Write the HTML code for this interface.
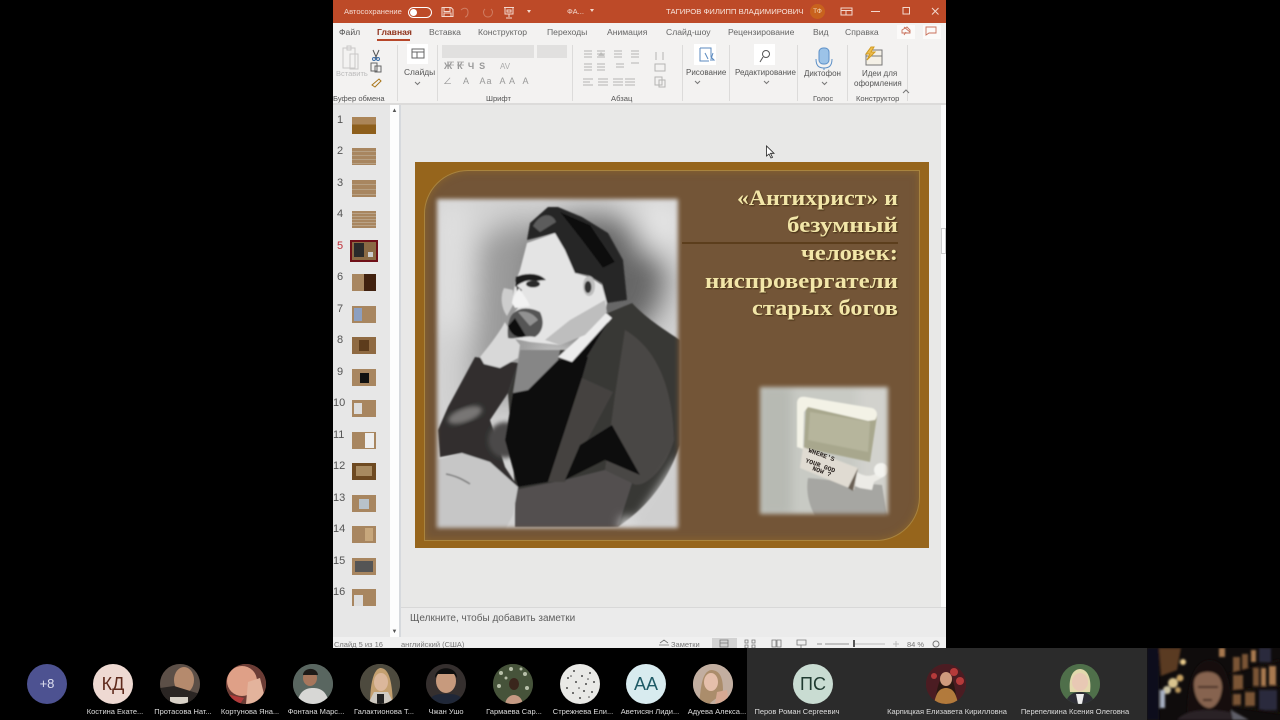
<!DOCTYPE html>
<html lang="ru"><head><meta charset="utf-8"><title>PowerPoint</title>
<style>
html,body{margin:0;padding:0;width:1280px;height:720px;overflow:hidden;background:#000;font-family:"Liberation Sans","Noto Sans CJK SC",sans-serif}
.a{position:absolute;white-space:nowrap}
.th{position:absolute;left:352px;width:24px;height:17px;background:#a88660}
.n{position:absolute;left:337px;font-size:11px;color:#555;line-height:12px}
.av{position:absolute;top:664px;width:40px;height:40px;border-radius:50%;overflow:hidden;text-align:center;line-height:40px;font-size:18px}
.nm{position:absolute;top:707px;font-size:7.5px;line-height:10px;color:#dcdcdc;white-space:nowrap;transform:translateX(-50%)}
.sep{position:absolute;top:45px;width:1px;height:56px;background:#dcdbda}
</style></head><body>

<!-- title bar -->
<div class="a" style="left:333px;top:0;width:613px;height:23px;background:#bd4a28"></div>
<div class="a" style="left:344px;top:6px;font-size:7.600px;line-height:11px;color:#f3d9cf">Автосохранение</div>
<div class="a" style="left:408px;top:7px;width:22px;height:9px;border:1px solid #fff;border-radius:6px"></div>
<div class="a" style="left:410px;top:9px;width:7px;height:7px;background:#fff;border-radius:50%"></div>
<svg class="a" style="left:333px;top:0" width="613" height="23" fill="none" stroke="#f3d9cf">
<path d="M109 7.500h9l2 2v7h-11zM111 7.500v4h6v-4M111 16v-3h7v3"/>
<path d="M128 10c3-3 7-2 7 2s-2 5-3 5" stroke="#cf7d62"/>
<path d="M152 9c-3 3-1 8 3 8s6-5 3-8" stroke="#cf7d62"/>
<path d="M171 7.500h10M172 8v6h8V8M176 14v3M173 18h6M174 10h4v2h-4z"/>
<path d="M194 10h4l-2 3z" fill="#f3d9cf" stroke="none"/>
<path d="M508 8h11v7h-11zM508 10.500h11M513 10.500v4.500"/>
<path d="M538 11.500h9"/>
<path d="M570 7.500h6.500v6.500h-6.500z"/>
<path d="M599 8l6.500 6.500M605.500 8l-6.500 6.500"/>
</svg>
<div class="a" style="left:567px;top:6px;font-size:7.600px;line-height:11px;color:#f3d9cf">ФА...</div>
<div class="a" style="left:590px;top:9px;border-top:3px solid #f3d9cf;border-left:2.500px solid transparent;border-right:2.500px solid transparent"></div>
<div class="a" style="left:666px;top:6px;font-size:7.700px;line-height:11px;color:#f8e6de">ТАГИРОВ ФИЛИПП ВЛАДИМИРОВИЧ</div>
<div class="a" style="left:810px;top:4px;width:15px;height:15px;border-radius:50%;background:#c8621d;color:#f6d7b8;font-size:6.500px;line-height:15px;text-align:center">ТФ</div>

<!-- tabs -->
<div class="a" style="left:333px;top:23px;width:613px;height:80px;background:#f3f2f1"></div>
<div class="a" style="left:339px;top:27px;font-size:8.600px;line-height:11px;color:#555">Файл</div>
<div class="a" style="left:377px;top:27px;font-size:8.600px;line-height:11px;color:#8e2f18;font-weight:bold">Главная</div>
<div class="a" style="left:377px;top:39px;width:33px;height:2px;background:#b7472a"></div>
<div class="a" style="left:429px;top:27px;font-size:8.600px;line-height:11px;color:#666">Вставка</div>
<div class="a" style="left:478px;top:27px;font-size:8.600px;line-height:11px;color:#666">Конструктор</div>
<div class="a" style="left:547px;top:27px;font-size:8.600px;line-height:11px;color:#666">Переходы</div>
<div class="a" style="left:607px;top:27px;font-size:8.600px;line-height:11px;color:#666">Анимация</div>
<div class="a" style="left:666px;top:27px;font-size:8.600px;line-height:11px;color:#666">Слайд-шоу</div>
<div class="a" style="left:728px;top:27px;font-size:8.600px;line-height:11px;color:#666">Рецензирование</div>
<div class="a" style="left:813px;top:27px;font-size:8.600px;line-height:11px;color:#666">Вид</div>
<div class="a" style="left:845px;top:27px;font-size:8.600px;line-height:11px;color:#666">Справка</div>
<div class="a" style="left:897px;top:25px;width:18px;height:14px;background:#fbfaf9"></div>
<div class="a" style="left:923px;top:25px;width:18px;height:14px;background:#fbfaf9"></div>

<!-- ribbon -->
<div class="sep" style="left:397px"></div><div class="sep" style="left:437px"></div>
<div class="sep" style="left:572px"></div><div class="sep" style="left:682px"></div>
<div class="sep" style="left:729px"></div><div class="sep" style="left:797px"></div>
<div class="sep" style="left:847px"></div><div class="sep" style="left:907px"></div>
<div class="a" style="left:407px;top:44px;width:21px;height:20px;background:#fff"></div>
<div class="a" style="left:442px;top:45px;width:92px;height:13px;background:#e1e0df"></div>
<div class="a" style="left:537px;top:45px;width:30px;height:13px;background:#e1e0df"></div>
<div class="a" style="left:694px;top:44px;width:22px;height:21px;background:#fff"></div>
<div class="a" style="left:754px;top:44px;width:21px;height:21px;background:#fff"></div>
<svg class="a" style="left:333px;top:23px" width="613" height="80" fill="none" stroke="#a5a4a3">
<path d="M569 7l5-3 3 3v3h-8zM573 9l-2 3M571 4l6 5" stroke="#c9705a" stroke-width=".9"/>
<path d="M593 4h10v6h-7l-3 2z" stroke="#c9705a" stroke-width=".9"/>
<path d="M10 25h12v20H10zM14 23h4v4h-4zM17 31h8v15h-8z" stroke="#c9c8c7"/>
<path d="M40 27l4 9M46 27l-4 9" stroke="#555"/><circle cx="41" cy="36" r="1.500" stroke="#3d6fa8"/><circle cx="45" cy="36" r="1.500" stroke="#3d6fa8"/>
<path d="M38 40h6v8h-6zM42 43h6v6h-6z" stroke="#666"/>
<path d="M39 62l7-6 2 2-6 6z" stroke="#a87417"/>
<path d="M79 26h12v9H79zM79 29h12M84 29v6" stroke="#666"/>
<path d="M82 59l2.500 2.500 2.500-2.500M362 58l2.500 2.500 2.500-2.500M431 58l2.500 2.500 2.500-2.500M489 59l2.500 2.500 2.500-2.500" stroke="#777"/>
<path d="M268 29l-3 4h7z" fill="#c4c3c2" stroke="none"/>
<g stroke="#b5b4b3">
<path d="M114 39h7M114 42h7M124 39h7M124 42h7M251 28h8M251 31h8M251 34h8M264 28h8M264 31h8M264 34h8M281 28h8M281 31h8M281 34h8M298 28h8M298 31h8M298 34h8"/>
<path d="M251 41h8M251 44h8M251 47h8M264 41h8M264 44h8M264 47h8M283 41h8M283 44h8M298 40h8"/>
<path d="M250 56h10M250 59h7M250 62h10M265 56h10M265 59h10M265 62h10M280 56h10M280 59h10M280 62h10M292 56h10M292 59h10M292 62h10"/>
<path d="M323 29v8M330 29v8M322 41h10v7h-10zM322 54h7v8h-7zM326 57h6v7h-6z"/>
</g>
<path d="M367 25h11v9l3 3h-4M367 25v13h9" stroke="#5b8abf"/>
<path d="M372 30l3 6M380 30l-2 6" stroke="#5b8abf"/>
<circle cx="433" cy="31" r="3.500" stroke="#555"/><path d="M430 34l-3 5" stroke="#555"/>
<rect x="486" y="25" width="10" height="16" rx="4" fill="#9cc3e8" stroke="#5b8fc7"/>
<path d="M483 36c0 7 3 9 8 9s8-2 8-9M491 45v2" stroke="#5b8fc7"/>
<path d="M536 27h13v15h-16V31z" stroke="#777" fill="#f4f0e6"/><path d="M533 33h16" stroke="#777"/>
<path d="M538 24l-5 7h4l-3 6 8-8h-4l3-5z" fill="#eebe51" stroke="#d39c1f"/>
<path d="M570 70l3-3 3 3" stroke="#777"/>
</svg>
<div class="a" style="left:336px;top:69px;font-size:7.500px;line-height:10px;color:#bbb">Вставить</div>
<div class="a" style="left:404px;top:67px;font-size:8.400px;line-height:11px;color:#555">Слайды</div>
<div class="a" style="left:444px;top:61px;font-size:9px;line-height:11px;color:#999;letter-spacing:5px;font-weight:bold">ЖКЧS</div>
<div class="a" style="left:500px;top:61px;font-size:8px;line-height:11px;color:#aaa">AV</div>
<div class="a" style="left:443px;top:76px;font-size:9px;line-height:11px;color:#999;letter-spacing:1px">∠ &nbsp; A &nbsp; Aa &nbsp;A A &nbsp;A</div>
<div class="a" style="left:686px;top:67px;font-size:8px;line-height:11px;color:#555">Рисование</div>
<div class="a" style="left:735px;top:67px;font-size:8px;line-height:11px;color:#555">Редактирование</div>
<div class="a" style="left:804px;top:68px;font-size:8px;line-height:11px;color:#555">Диктофон</div>
<div class="a" style="left:862px;top:68px;font-size:8px;line-height:11px;color:#555">Идеи для</div>
<div class="a" style="left:854px;top:78px;font-size:8px;line-height:11px;color:#555">оформления</div>
<div class="a" style="left:333px;top:93px;font-size:7.600px;line-height:11px;color:#555">Буфер обмена</div>
<div class="a" style="left:486px;top:93px;font-size:7.600px;line-height:11px;color:#555">Шрифт</div>
<div class="a" style="left:611px;top:93px;font-size:7.600px;line-height:11px;color:#555">Абзац</div>
<div class="a" style="left:813px;top:93px;font-size:7.600px;line-height:11px;color:#555">Голос</div>
<div class="a" style="left:856px;top:93px;font-size:7.600px;line-height:11px;color:#555">Конструктор</div>

<!-- panes -->
<div class="a" style="left:333px;top:103px;width:613px;height:2px;background:#dcdbda"></div>
<div class="a" style="left:333px;top:105px;width:67px;height:532px;background:#e7e7e7"></div>
<div class="a" style="left:390px;top:105px;width:9px;height:532px;background:#fdfdfd"></div>
<div class="a" style="left:399px;top:105px;width:2px;height:532px;background:#d6d9dd"></div>
<div class="a" style="left:401px;top:105px;width:540px;height:502px;background:#e8e8e7"></div>
<div class="a" style="left:941px;top:105px;width:5px;height:532px;background:#fbfbfb"></div>
<div class="a" style="left:941px;top:228px;width:5px;height:26px;background:#fff;border:1px solid #ccc;box-sizing:border-box"></div>
<div class="a" style="left:401px;top:607px;width:545px;height:1px;background:#d8d8d8"></div>
<div class="a" style="left:401px;top:608px;width:545px;height:29px;background:#ebebeb"></div>
<div class="a" style="left:410px;top:612px;font-size:10px;line-height:13px;color:#5e5e5e">Щелкните, чтобы добавить заметки</div>
<div class="a" style="left:333px;top:637px;width:613px;height:11px;background:#f0f0f0"></div>
<div class="a" style="left:334px;top:640px;font-size:7.500px;line-height:10px;color:#777">Слайд 5 из 16</div>
<div class="a" style="left:401px;top:640px;font-size:7.500px;line-height:10px;color:#777">английский (США)</div>
<div class="a" style="left:671px;top:640px;font-size:7.500px;line-height:10px;color:#777">Заметки</div>
<div class="a" style="left:712px;top:638px;width:25px;height:10px;background:#d2d2d2"></div>
<svg class="a" style="left:655px;top:637px" width="291" height="11" fill="none" stroke="#777">
<path d="M5 6l4-3 4 3M4 8h10M65 3h8v7h-8zM65 6h8M90 3h3v3h-3zM97 3h3v3h-3zM90 8h3v3h-3zM97 8h3v3h-3zM117 3h4v7h-4zM122 3h4v7h-4zM142 3h9v5h-9zM146 8v3M162 7h5M170 7h24" stroke-width=".8"/>
<path d="M199 3v7" stroke="#555" stroke-width="2"/><path d="M200 7h30M238 7h6M241 4v6" stroke="#bbb"/>
<circle cx="281" cy="7" r="3"/>
</svg>
<div class="a" style="left:907px;top:640px;font-size:7.500px;line-height:10px;color:#777">84 %</div>
<div class="a" style="left:391px;top:107px;width:7px;height:8px;color:#555;font-size:6px;line-height:8px;text-align:center">▲</div>
<div class="a" style="left:391px;top:628px;width:7px;height:8px;color:#555;font-size:6px;line-height:8px;text-align:center">▼</div>

<!-- thumbs -->
<span class="n" style="top:114px">1</span><div class="th" style="top:117px;background:linear-gradient(#ab8558 45%,#8e5f1c 45%)"></div>
<span class="n" style="top:145px">2</span><div class="th" style="top:148px;background:repeating-linear-gradient(#a88660 0 3px,#b7a083 3px 4px)"></div>
<span class="n" style="top:177px">3</span><div class="th" style="top:180px;background:repeating-linear-gradient(#a88660 0 4px,#b7a083 4px 5px)"></div>
<span class="n" style="top:208px">4</span><div class="th" style="top:211px;background:repeating-linear-gradient(#a88660 0 2px,#b9a286 2px 3px)"></div>
<span class="n" style="top:240px;color:#c0303a">5</span>
<div class="a" style="left:350px;top:240px;width:24px;height:18px;border:2px solid #6f1018;background:#8a6a44"></div>
<div class="a" style="left:354px;top:243px;width:10px;height:14px;background:#2a2a2a"></div><div class="a" style="left:368px;top:252px;width:5px;height:5px;background:#ccc"></div>
<span class="n" style="top:271px">6</span><div class="th" style="top:274px;background:linear-gradient(90deg,#a88660 50%,#41210f 50%)"></div>
<span class="n" style="top:303px">7</span><div class="th" style="top:306px"></div><div class="a" style="left:354px;top:308px;width:8px;height:13px;background:#8c9fc0"></div>
<span class="n" style="top:334px">8</span><div class="th" style="top:337px;background:#8f6a42"></div><div class="a" style="left:359px;top:340px;width:10px;height:11px;background:#5d3c1c"></div>
<span class="n" style="top:366px">9</span><div class="th" style="top:369px"></div><div class="a" style="left:360px;top:373px;width:9px;height:10px;background:#111"></div>
<span class="n" style="top:397px;left:333px">10</span><div class="th" style="top:400px"></div><div class="a" style="left:354px;top:403px;width:8px;height:11px;background:#ddd"></div>
<span class="n" style="top:429px;left:333px">11</span><div class="th" style="top:432px"></div><div class="a" style="left:365px;top:433px;width:9px;height:15px;background:#eee"></div>
<span class="n" style="top:460px;left:333px">12</span><div class="th" style="top:463px;background:#6e4a22"></div><div class="a" style="left:356px;top:466px;width:16px;height:10px;background:#a88a60"></div>
<span class="n" style="top:492px;left:333px">13</span><div class="th" style="top:495px"></div><div class="a" style="left:359px;top:499px;width:10px;height:10px;background:#b8c2ca"></div>
<span class="n" style="top:523px;left:333px">14</span><div class="th" style="top:526px"></div><div class="a" style="left:365px;top:528px;width:8px;height:13px;background:#c7a77c"></div>
<span class="n" style="top:555px;left:333px">15</span><div class="th" style="top:558px"></div><div class="a" style="left:355px;top:561px;width:18px;height:11px;background:#555"></div>
<span class="n" style="top:586px;left:333px">16</span><div class="th" style="top:589px"></div><div class="a" style="left:354px;top:595px;width:9px;height:11px;background:#ddd"></div>

<!-- slide background -->
<div class="a" style="left:415px;top:162px;width:514px;height:386px;background:#96651c"></div>
<div class="a" style="left:424px;top:170px;width:496px;height:371px;box-sizing:border-box;border:1px solid #a9843f;border-radius:44px 0 44px 0;background:#735537;box-shadow:inset 0 0 8px 0 #8d662c"></div>

<!-- slide -->
<svg class="a" style="left:415px;top:162px" width="514" height="386" viewBox="415 162 514 386">
<defs>
<filter id="b1" x="-10%" y="-10%" width="120%" height="120%"><feGaussianBlur stdDeviation="2"/></filter>
<filter id="b2" x="-20%" y="-20%" width="140%" height="140%"><feGaussianBlur stdDeviation="5"/></filter>
<filter id="b3" x="-30%" y="-30%" width="160%" height="160%"><feGaussianBlur stdDeviation="14"/></filter>
<filter id="b4" x="-5%" y="-5%" width="110%" height="110%"><feGaussianBlur stdDeviation=".8"/></filter>
<filter id="b5" x="-5%" y="-5%" width="110%" height="110%"><feGaussianBlur stdDeviation=".5"/></filter>
<filter id="b6" x="-5%" y="-5%" width="110%" height="110%"><feGaussianBlur stdDeviation=".9"/></filter>
<mask id="mp" maskUnits="userSpaceOnUse" x="425" y="187" width="265" height="353"><rect x="437" y="199" width="241" height="329" fill="#fff" filter="url(#b1)"/></mask>
<mask id="mq" maskUnits="userSpaceOnUse" x="748" y="375" width="152" height="151"><rect x="760" y="387" width="128" height="127" fill="#fff" filter="url(#b1)"/></mask>
</defs>
<line x1="682" y1="243" x2="898" y2="243" stroke="#4f300c" stroke-width="1.300"/>

<!-- portrait -->
<g mask="url(#mp)">
<rect x="430" y="190" width="255" height="345" fill="#d2d2d2"/>
<g filter="url(#b3)">
<ellipse cx="590" cy="280" rx="75" ry="65" fill="#666"/>
<path d="M480 240L530 215 540 400 470 400z" fill="#9a9a9a"/>
<rect x="640" y="200" width="40" height="50" fill="#e6e6e6"/>
<rect x="437" y="200" width="30" height="130" fill="#e2e2e2"/>
</g>
<g filter="url(#b6)">
<!-- coat main -->
<path d="M632 303C648 320 668 332 680 340V445C668 480 650 505 618 527H515V490L508 393 518 363 540 350H585L608 313z" fill="#393736"/>
<path d="M625 330C650 345 672 375 674 440 664 475 640 490 632 483L605 470 615 395z" fill="#494745"/>
<path d="M515 490L565 480 605 470 632 483 618 527H515z" fill="#525050"/>
<!-- left arm -->
<path d="M475 357L518 363 508 393 490 420 505 467 518 487 462 453 440 457 438 430 448 407z" fill="#302f2e"/>
<ellipse cx="465" cy="415" rx="18" ry="7" fill="#787674" transform="rotate(-20 465 415)" filter="url(#b1)"/>
<ellipse cx="505" cy="440" rx="17" ry="18" fill="#4b4a49" filter="url(#b1)"/>
<!-- black vest -->
<path d="M513 393L528 390 545 373 558 360 588 357 582 378 548 482 518 487 505 440z" fill="#090909"/>
<!-- lapel -->
<path d="M582 378L613 392 565 482 548 482z" fill="#444240"/>
<path d="M580 445L612 425 640 475 605 460 565 480z" fill="#0b0b0b"/>
<!-- grey gap -->
<path d="M520 350H560L558 360 545 373 528 390 513 393 518 363z" fill="#868686"/>
<!-- white hand on table -->
<path d="M437 460L462 453 490 462 518 487 513 515 505 530H437z" fill="#c6c6c6"/>
<path d="M446 474C456 476 462 479 470 484" stroke="#7a7a7a" stroke-width="1.500" fill="none"/>
<!-- shirt collar -->
<path d="M558 357L606 313 612 318 572 362z" fill="#ececec"/>
<path d="M572 362L608 322 586 358z" fill="#111"/>
<!-- hand and wrist -->
<path d="M480 357C488 347 498 335 505 322L512 335 520 345 518 358 500 368 484 364z" fill="#d8d8d8"/>
<path d="M504 288C500 296 501 308 507 316L513 305 513 290z" fill="#cdcdcd"/>
<!-- face -->
<path d="M527 243L555 233 565 250 575 273 590 277 602 285 607 303 605 315 585 335 560 345 530 342 510 338 511 316 518 308 512 303 515 283 520 270z" fill="#e4e4e4"/>
<path d="M570 320L605 300 607 312 585 335 560 345 545 340z" fill="#bebebe"/>
<!-- hair -->
<path d="M527 240L530 223 548 207 558 207 582 217 608 233 623 260 627 300 607 303 602 283 588 275 575 273 565 250 555 233z" fill="#262626"/>
<path d="M560 212L590 225 615 262 603 268 582 240z" fill="#101010"/>
<path d="M533 226C540 213 552 212 556 222L540 232z" fill="#5c5c5c"/>
<!-- brow, eye, ear, nose -->
<path d="M516 277C526 272 540 273 546 280L536 281C528 279 522 282 515 287z" fill="#1b1b1b"/>
<ellipse cx="533" cy="284" rx="7" ry="3.500" fill="#2a2a2a"/>
<path d="M516 285L522 290 518 296z" fill="#3a3a3a"/>
<ellipse cx="589" cy="286" rx="6" ry="10" fill="#bdbdbd"/>
<ellipse cx="588" cy="287" rx="3.500" ry="6" fill="#333"/>
<path d="M512 303C513 296 517 292 519 288L527 300 530 306 515 308z" fill="#f2f2f2"/>
<!-- moustache -->
<path d="M511 316C518 306 530 307 540 312 545 322 543 332 535 337 525 335 515 340 508 338 507 330 508 322 511 316z" fill="#555"/>
<path d="M508 326C510 334 518 340 526 336L515 318z" fill="#111"/>
<path d="M518 312C526 310 534 314 538 320L530 326z" fill="#929292"/>
</g>
<g filter="url(#b2)">
<rect x="620" y="518" width="70" height="20" fill="#dcdcdc"/>
<path d="M680 455V530H630z" fill="#cfcfcf"/>
</g>
</g>

<!-- toilet paper photo -->
<g mask="url(#mq)">
<rect x="752" y="380" width="144" height="141" fill="#c8cac4"/>
<g filter="url(#b2)"><rect x="858" y="385" width="32" height="131" fill="#d2d2cd"/><rect x="758" y="385" width="34" height="131" fill="#b7bab3"/></g>
<g filter="url(#b4)">
<path d="M808 478L882 485 887 516H815C808 503 806 490 808 478z" fill="#a6a6a2"/>
<path d="M806 406L877 416 870 462 804 448z" fill="#a8a78d"/>
<path d="M810 412L870 422 868 452 808 440z" fill="#b6b59c"/>
<path d="M797 404C797 398 800 396 806 397L872 408C878 410 878 416 875 420L868 421 808 407 804 412 803 449 797 447z" fill="#f3f2e6"/>
<path d="M803 447L858 468 854 490 800 468z" fill="#e0dbd2"/>
<path d="M857 472C866 478 874 476 878 472L885 476 874 482 872 490 860 488 855 486z" fill="#ecebe6"/>
<circle cx="881" cy="470" r="7" fill="#f3f3ef"/>
<path d="M858 468L853 491 848 488z" fill="#6b6155"/>
</g>
<g fill="#2a2320" font-family="Liberation Mono, monospace" font-size="6.500" font-weight="bold">
<text x="808" y="452" transform="rotate(20 808 452)">WHERE'S</text>
<text x="805" y="462" transform="rotate(20 805 462)">YOUR GOD</text>
<text x="812" y="470" transform="rotate(20 812 470)">NOW ?</text>
</g>
</g>

<!-- title -->
<g font-family="Liberation Serif, serif" font-size="22.500" font-weight="bold">
<g fill="#3e2a10" transform="translate(1 1)" opacity=".85" filter="url(#b5)">
<text x="737" y="205" textLength="161" lengthAdjust="spacingAndGlyphs">«Антихрист» и</text><text x="787" y="232" textLength="111" lengthAdjust="spacingAndGlyphs">безумный</text><text x="801" y="260" textLength="97" lengthAdjust="spacingAndGlyphs">человек:</text><text x="705" y="288" textLength="193" lengthAdjust="spacingAndGlyphs">ниспровергатели</text><text x="752" y="315" textLength="146" lengthAdjust="spacingAndGlyphs">старых богов</text>
</g>
<g fill="#f2e6a8">
<text x="737" y="205" textLength="161" lengthAdjust="spacingAndGlyphs">«Антихрист» и</text><text x="787" y="232" textLength="111" lengthAdjust="spacingAndGlyphs">безумный</text><text x="801" y="260" textLength="97" lengthAdjust="spacingAndGlyphs">человек:</text><text x="705" y="288" textLength="193" lengthAdjust="spacingAndGlyphs">ниспровергатели</text><text x="752" y="315" textLength="146" lengthAdjust="spacingAndGlyphs">старых богов</text>
</g>
</g>
</svg>

<!-- cursor -->
<svg class="a" style="left:764px;top:145px" width="12" height="14"><path d="M2.500 1v10l2.500-2 2 4 1.500-.7-2-4h3.500z" fill="#fff" stroke="#222" stroke-width=".8"/></svg>

<!-- bottom strip -->
<div class="a" style="left:0;top:648px;width:1280px;height:72px;background:#000"></div>
<div class="a" style="left:747px;top:648px;width:400px;height:72px;background:#2b2b2b"></div>

<div class="av" style="left:27px;background:#4d5291;color:#dfe0f0;font-size:13px">+8</div>
<div class="av" style="left:93px;background:#eed9d2;color:#5f2a1c">КД</div>
<div class="av" style="left:160px;background:#3a3230"><svg width="40" height="40"><rect width="40" height="40" fill="#5c4f47"/><ellipse cx="24" cy="16" rx="10" ry="13" fill="#b58a6d"/><path d="M0 40V24L14 22 40 30V40z" fill="#2a2523"/><rect x="10" y="33" width="18" height="7" fill="#d9d2c8"/></svg></div>
<div class="av" style="left:226px;background:#b76f5c"><svg width="40" height="40"><rect width="40" height="40" fill="#6b3c35"/><ellipse cx="16" cy="17" rx="15" ry="15" fill="#dfa087"/><path d="M20 40L22 18 34 14 38 30 34 40z" fill="#e3b39c"/><path d="M0 30L18 34 14 40H0z" fill="#b23a3a"/></svg></div>
<div class="av" style="left:293px;background:#6f7a75"><svg width="40" height="40"><rect width="40" height="40" fill="#596660"/><path d="M4 40C6 26 14 24 20 24S34 26 36 40z" fill="#d7d7d5"/><ellipse cx="17" cy="14" rx="7" ry="8" fill="#a6765c"/><path d="M10 10C12 3 24 3 25 11L10 11z" fill="#1d1a18"/></svg></div>
<div class="av" style="left:360px;background:#77695a"><svg width="40" height="40"><rect width="40" height="40" fill="#4d4a3e"/><path d="M10 40C10 26 12 6 20 4 30 4 32 20 33 40z" fill="#c4a070"/><ellipse cx="21" cy="18" rx="7" ry="9" fill="#dbb79b"/><path d="M8 40L14 28 28 28 34 40z" fill="#cfcac2"/><rect x="17" y="30" width="7" height="10" fill="#222"/></svg></div>
<div class="av" style="left:426px;background:#222"><svg width="40" height="40"><rect width="40" height="40" fill="#352f2e"/><ellipse cx="20" cy="17" rx="10" ry="12" fill="#c79a7d"/><path d="M9 14C9 1 31 1 31 14L28 10H12z" fill="#0e0e0e"/><path d="M2 40C4 30 12 30 20 30S36 30 38 40z" fill="#1f2738"/></svg></div>
<div class="av" style="left:493px;background:#3d4a33"><svg width="40" height="40"><rect width="40" height="40" fill="#46533a"/><g fill="#b8c0aa"><circle cx="8" cy="9" r="2"/><circle cx="18" cy="5" r="2"/><circle cx="32" cy="10" r="2"/><circle cx="6" cy="22" r="2"/><circle cx="34" cy="24" r="2"/><circle cx="13" cy="14" r="1.500"/><circle cx="28" cy="5" r="1.500"/></g><ellipse cx="21" cy="20" rx="5" ry="6" fill="#3a261c"/><path d="M12 40C14 28 28 28 30 40z" fill="#c59a84"/></svg></div>
<div class="av" style="left:560px;background:#e9e9e6"><svg width="40" height="40"><g fill="#4a4a4a"><circle cx="8" cy="14" r="1"/><circle cx="14" cy="7" r="1"/><circle cx="22" cy="12" r="1"/><circle cx="30" cy="9" r="1"/><circle cx="34" cy="18" r="1"/><circle cx="26" cy="20" r="1"/><circle cx="16" cy="18" r="1"/><circle cx="7" cy="24" r="1"/><circle cx="13" cy="29" r="1"/><circle cx="24" cy="27" r="1"/><circle cx="32" cy="28" r="1"/><circle cx="20" cy="34" r="1"/><circle cx="11" cy="12" r=".8"/><circle cx="28" cy="15" r=".8"/><circle cx="19" cy="24" r=".8"/><circle cx="29" cy="33" r=".8"/></g></svg></div>
<div class="av" style="left:626px;background:#d8ebef;color:#1e5a66">АА</div>
<div class="av" style="left:693px;background:#c9b6a8"><svg width="40" height="40"><rect width="40" height="40" fill="#c2aea0"/><path d="M6 40C8 26 8 8 18 6 28 6 30 16 30 26 26 34 20 36 16 40z" fill="#a3825a" opacity=".75"/><ellipse cx="18" cy="18" rx="7" ry="9" fill="#e5bfab"/><path d="M24 28L34 26 36 40H22z" fill="#d6a993"/></svg></div>
<div class="av" style="left:793px;background:#c9dcd2;color:#1f3a30">ПС</div>
<div class="av" style="left:926px;background:#5a2323"><svg width="40" height="40"><rect width="40" height="40" fill="#4b1c22"/><g fill="#b53a3a"><circle cx="28" cy="8" r="4"/><circle cx="34" cy="17" r="4"/><circle cx="8" cy="12" r="3"/></g><path d="M9 40C10 30 12 14 20 8 28 10 30 30 31 40z" fill="#2b1712"/><ellipse cx="20" cy="15" rx="6" ry="7" fill="#cf9a7d"/><path d="M8 40C10 28 14 24 20 24S30 28 32 40z" fill="#b27a3c"/></svg></div>
<div class="av" style="left:1060px;background:#4a6a45"><svg width="40" height="40"><rect width="40" height="40" fill="#4f6f4a"/><path d="M10 28C8 12 14 5 20 5S32 12 30 28z" fill="#e3d9ad"/><ellipse cx="20" cy="18" rx="8" ry="9" fill="#e8c8b4"/><path d="M5 40C8 30 14 28 20 28S32 30 35 40z" fill="#2e2e36"/><path d="M16 30h8l-2 10h-4z" fill="#eee"/></svg></div>

<span class="nm" style="left:115px">Костина Екате...</span>
<span class="nm" style="left:183px">Протасова Нат...</span>
<span class="nm" style="left:250px">Кортунова Яна...</span>
<span class="nm" style="left:316px">Фонтана Марс...</span>
<span class="nm" style="left:384px">Галактионова Т...</span>
<span class="nm" style="left:446px">Чжан Ушо</span>
<span class="nm" style="left:514px">Гармаева Сар...</span>
<span class="nm" style="left:583px">Стрежнева Ели...</span>
<span class="nm" style="left:650px">Аветисян Лиди...</span>
<span class="nm" style="left:717px">Адуева Алекса...</span>
<span class="nm" style="left:797px">Перов Роман Сергеевич</span>
<span class="nm" style="left:947px">Карпицкая Елизавета Кирилловна</span>
<span class="nm" style="left:1075px">Перепелкина Ксения Олеговна</span>

<!-- webcam -->
<svg class="a" style="left:1147px;top:648px" width="133" height="72">
<defs><filter id="w"><feGaussianBlur stdDeviation="1.100"/></filter></defs>
<rect width="133" height="72" fill="#0f0c0c"/>
<g filter="url(#w)">
<path d="M12 0H34L30 22 14 28z" fill="#5a3a22"/>
<rect x="0" y="0" width="12" height="72" fill="#070a1c"/>
<circle cx="36" cy="14" r="3" fill="#e8c98a"/>
<circle cx="26" cy="35" r="5" fill="#d9c48e"/><circle cx="33" cy="30" r="3.500" fill="#c8a262"/><circle cx="20" cy="42" r="4" fill="#cbc2a0"/><circle cx="31" cy="42" r="3" fill="#b8955a"/>
<rect x="13" y="42" width="5" height="18" fill="#a5adc0"/>
<g fill="#7a5434">
<rect x="86" y="9" width="7" height="15"/><rect x="95" y="6" width="6" height="15"/><rect x="86" y="27" width="10" height="15"/><rect x="106" y="20" width="6" height="18"/><rect x="98" y="44" width="10" height="14"/><rect x="86" y="46" width="8" height="11"/>
</g>
<g fill="#a8794f"><rect x="72" y="0" width="6" height="9"/><rect x="114" y="20" width="5" height="18"/><rect x="122" y="18" width="7" height="19"/><rect x="104" y="2" width="5" height="12"/></g>
<g fill="#2c2a3c"><rect x="112" y="0" width="12" height="14"/><rect x="112" y="42" width="18" height="20"/></g>
<path d="M82 26L133 12M82 43L133 38M84 58L133 65" stroke="#171009" stroke-width="2"/>
<path d="M40 72C40 40 44 14 62 12 78 12 84 28 86 72z" fill="#17110d"/>
<path d="M47 36C47 26 55 24 61 24 70 24 75 30 75 40 74 52 68 60 62 60 54 59 47 50 47 36z" fill="#86644f"/>
<path d="M51 39h20M56 52h9" stroke="#3a2319" stroke-width="1.800"/>
<path d="M30 72C36 64 50 62 62 62 74 62 90 64 100 72z" fill="#2a2426"/>
<path d="M86 72L84 62 102 72z" fill="#5f5f68"/>
</g>
</svg>
</body></html>
